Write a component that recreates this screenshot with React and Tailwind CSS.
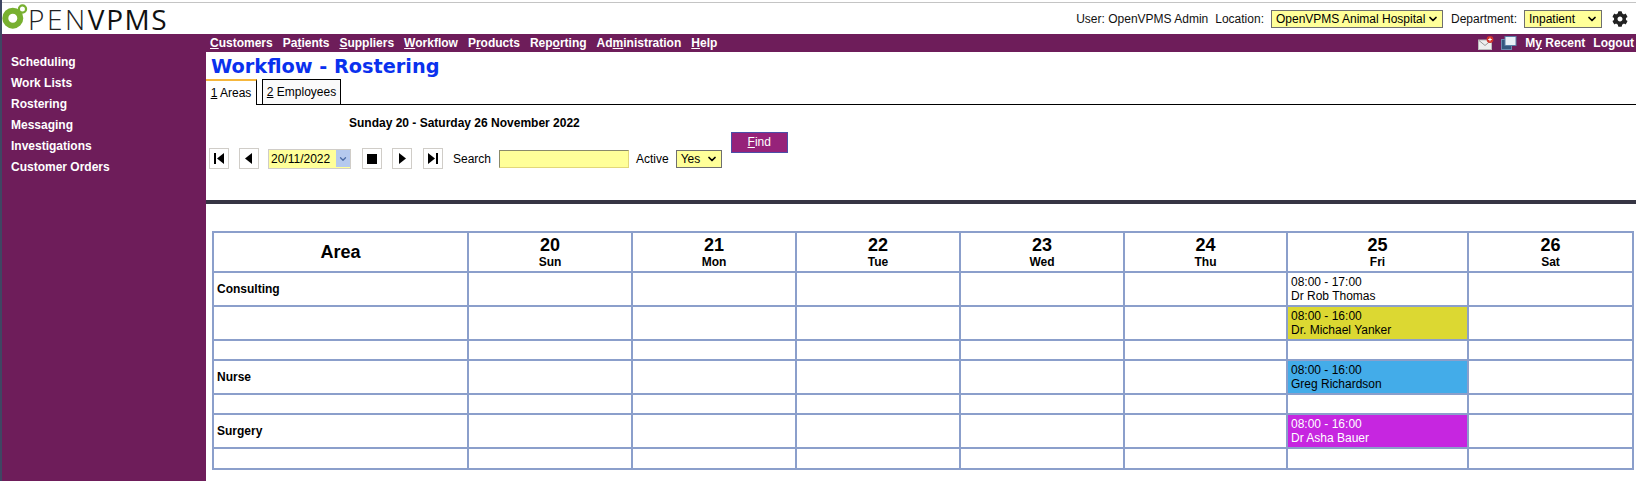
import React from 'react'
import { ChevronDown } from 'lucide-react'
import { FaCog } from 'react-icons/fa'

const font = "font-['Liberation_Sans',Arial,sans-serif]"

const sideLinks = ['Scheduling', 'Work Lists', 'Rostering', 'Messaging', 'Investigations', 'Customer Orders']

// first letter index that gets underlined in the top menu
const menu = [
  ['', 'C', 'ustomers'],
  ['Pa', 't', 'ients'],
  ['', 'S', 'uppliers'],
  ['', 'W', 'orkflow'],
  ['P', 'r', 'oducts'],
  ['Rep', 'o', 'rting'],
  ['Ad', 'm', 'inistration'],
  ['', 'H', 'elp'],
]

const days = [
  ['20', 'Sun'], ['21', 'Mon'], ['22', 'Tue'], ['23', 'Wed'], ['24', 'Thu'], ['25', 'Fri'], ['26', 'Sat'],
]

const rows = [
  { area: 'Consulting', h: 'h-[34px]', time: '08:00 - 17:00', name: 'Dr Rob Thomas', cell: 'text-black' },
  { area: '', h: 'h-[34px]', time: '08:00 - 16:00', name: 'Dr. Michael Yanker', cell: 'bg-[#dcd832] text-black' },
  { area: '', h: 'h-[20px]' },
  { area: 'Nurse', h: 'h-[34px]', time: '08:00 - 16:00', name: 'Greg Richardson', cell: 'bg-[#43ace9] text-black' },
  { area: '', h: 'h-[20px]' },
  { area: 'Surgery', h: 'h-[34px]', time: '08:00 - 16:00', name: 'Dr Asha Bauer', cell: 'bg-[#c626e0] text-white' },
  { area: '', h: 'h-[21px]' },
]

const cellLine = 'border-r-[2px] border-b-[2px] border-r-[#8b9fcb] border-b-[#8b9fcb]'

function NavButton({ children }) {
  return (
    <button className="w-[20px] h-[21px] flex items-center justify-center bg-white border border-[#d0cdc8]">
      {children}
    </button>
  )
}

function YellowSelect({ label, width, className = '' }) {
  return (
    <div className={`h-[18px] ${width} flex items-center justify-between bg-[#ffff99] border border-[#6f6f6f] pl-[4px] pr-[3px] text-[12px] text-black ${className}`}>
      <span>{label}</span>
      <ChevronDown size={12} strokeWidth={3.5} />
    </div>
  )
}

function Logo() {
  return (
    <div className="flex items-center h-[31px]">
      <svg width="26" height="31" viewBox="0 0 26 31" className="shrink-0">
        <circle cx="10.8" cy="15.2" r="7.5" fill="none" stroke="#78b030" strokeWidth="6" />
        <circle cx="20.5" cy="6" r="3.6" fill="#fff" stroke="#78b030" strokeWidth="2.2" />
      </svg>
      <span className="text-[28px] leading-none font-['Open_Sans',sans-serif] font-light text-[#222] tracking-[2.6px]">PEN</span>
      <span className="text-[28px] leading-none font-['Open_Sans',sans-serif] font-medium text-[#111] tracking-[1.6px]">VPMS</span>
    </div>
  )
}

export default function App() {
  return (
    <div className={`w-[1636px] h-[481px] overflow-hidden flex flex-col bg-white ${font} border-l-2 border-l-[#3f4663]`}>
      <div className="h-[34px] shrink-0 bg-white flex flex-col">
        <div className="h-[3px] shrink-0 border-b border-b-[#c4c4c4]" />
        <div className="flex-1 flex items-center justify-between">
          <Logo />
          <div className="flex items-center text-[12px] text-[#111] pr-[8px]">
            <span>User: OpenVPMS Admin</span>
            <span className="ml-[7px]">Location:</span>
            <YellowSelect label="OpenVPMS Animal Hospital" width="w-[172px]" className="ml-[7px]" />
            <span className="ml-[8px]">Department:</span>
            <YellowSelect label="Inpatient" width="w-[78px]" className="ml-[7px]" />
            <FaCog size={16} className="ml-[10px] text-[#222]" />
          </div>
        </div>
      </div>

      <div className="flex-1 flex min-h-0">
        <aside className="w-[204px] shrink-0 bg-[#6e1d5a] pt-[18px] pl-[9px]">
          {sideLinks.map((l) => (
            <div key={l} className="h-[21px] text-[12px] font-bold text-white leading-[21px]">{l}</div>
          ))}
        </aside>

        <main className="flex-1 min-w-0 flex flex-col">
          <div className="h-[18px] shrink-0 bg-[#6e1d5a] flex items-center justify-between text-[12px] font-bold text-white pl-[4px] pr-[2px]">
            <div className="flex gap-[10px]">
              {menu.map(([a, u, b]) => (
                <span key={u + b}>{a}<u>{u}</u>{b}</span>
              ))}
            </div>
            <div className="flex items-center">
              <svg width="16" height="14" viewBox="0 0 16 14">
                <rect x="0.5" y="4" width="13" height="9.5" fill="#eee" stroke="#bbb" />
                <path d="M1 4.5 L7 9.5 L13 4.5" fill="none" stroke="#999" />
                <circle cx="12" cy="3.5" r="3.4" fill="#d0342c" />
                <path d="M10.2 3.5 H13.8 M12 1.7 V5.3" stroke="#fff" />
              </svg>
              <svg width="16" height="14" viewBox="0 0 16 14" className="ml-[7px]">
                <rect x="0.5" y="3.5" width="10" height="10" fill="#33577f" stroke="#6c8bb0" />
                <rect x="4" y="0.5" width="11" height="9" fill="#e8f0f8" stroke="#5a7ea6" />
              </svg>
              <span className="ml-[8px]">M<u>y</u> Recent</span>
              <span className="ml-[8px]">Logout</span>
            </div>
          </div>

          <h1 className="h-[28px] shrink-0 pl-[5px] text-[19.3px] leading-[29px] font-bold text-[#0a31ee] font-['DejaVu_Sans',sans-serif]">Workflow - Rostering</h1>

          <div className="h-[25px] shrink-0 flex items-end border-b border-b-black text-[12px] text-black">
            <div className="h-[26px] w-[51px] -mb-px bg-white border-t-2 border-t-[#f6b73c] border-r border-r-black flex items-center justify-center">
              <span><u>1</u> Areas</span>
            </div>
            <div className="h-[25px] w-[79px] ml-[5px] bg-[#fafafa] border-x border-t border-black flex items-center justify-center">
              <span><u>2</u> Employees</span>
            </div>
          </div>

          <div className="h-[126px] shrink-0 pl-[3px] flex flex-col relative">
            <div className="pl-[140px] pt-[11px] text-[12px] leading-[14px] font-bold text-black">Sunday 20 - Saturday 26 November 2022</div>
            <div className="flex items-center mt-[18px] text-[12px] text-black">
              <NavButton>
                <svg width="14" height="13" viewBox="0 0 14 13"><path d="M2 1h2v11H2zM12 1v11L5 6.5z" /></svg>
              </NavButton>
              <div className="ml-[10px]">
                <NavButton>
                  <svg width="10" height="13" viewBox="0 0 10 13"><path d="M8 1v11L1 6.5z" /></svg>
                </NavButton>
              </div>
              <div className="ml-[9px] h-[20px] w-[83px] flex items-center bg-[#ffff99] border border-[#d0cdc8] pl-[2px]">
                <span className="flex-1">20/11/2022</span>
                <span className="w-[14px] h-[17px] bg-[#b5c9ee] flex items-center justify-center text-[#4a6aa5]">
                  <ChevronDown size={10} strokeWidth={3} />
                </span>
              </div>
              <div className="ml-[11px]">
                <NavButton><span className="block w-[10px] h-[10px] bg-black" /></NavButton>
              </div>
              <div className="ml-[10px]">
                <NavButton>
                  <svg width="10" height="13" viewBox="0 0 10 13"><path d="M2 1v11l7-5.5z" /></svg>
                </NavButton>
              </div>
              <div className="ml-[11px]">
                <NavButton>
                  <svg width="14" height="13" viewBox="0 0 14 13"><path d="M2 1v11l7-5.5zM10 1h2v11h-2z" /></svg>
                </NavButton>
              </div>
              <span className="ml-[10px]">Search</span>
              <div className="ml-[8px] w-[130px] h-[18px] bg-[#ffff99] border border-[#e2d77a] border-t-[#8a8a6a] border-l-[#8a8a6a]" />
              <span className="ml-[7px]">Active</span>
              <YellowSelect label="Yes" width="w-[46px]" className="ml-[7px]" />
              <button className="ml-[9px] -mt-[33px] w-[57px] h-[21px] bg-[#96227a] border border-[#4a4fa8] text-white text-[12px]">
                <u>F</u>ind
              </button>
            </div>
            <div className="absolute left-0 right-0 top-[95px] h-[4px] bg-[#363544]" />
          </div>

          <div className="pl-[6px]">
            <table className="table-fixed border-collapse w-[1420px] border-t-[2px] border-l-[2px] border-[#8b9fcb]">
              <colgroup>
                <col className="w-[255px]" />
                <col className="w-[164px]" />
                <col className="w-[164px]" />
                <col className="w-[164px]" />
                <col className="w-[164px]" />
                <col className="w-[163px]" />
                <col className="w-[181px]" />
                <col className="w-[165px]" />
              </colgroup>
              <thead>
                <tr className="h-[40px]">
                  <th className={`${cellLine} text-[18px] font-bold text-black p-0`}>Area</th>
                  {days.map(([n, d]) => (
                    <th key={n} className={`${cellLine} p-0 text-black font-bold`}>
                      <div className="text-[18px] leading-[20px]">{n}</div>
                      <div className="text-[12px] leading-[14px]">{d}</div>
                    </th>
                  ))}
                </tr>
              </thead>
              <tbody>
                {rows.map((r, i) => (
                  <tr key={i} className={r.h}>
                    <td className={`${cellLine} p-0 pl-[3px] text-[12px] font-bold text-black`}>{r.area}</td>
                    {days.map(([n]) => {
                      const show = n === '25' && r.time
                      return (
                        <td key={n} className={`${cellLine} p-0 pl-[3px] text-[12px] leading-[14px] ${show ? r.cell : ''}`}>
                          {show && <div>{r.time}<br />{r.name}</div>}
                        </td>
                      )
                    })}
                  </tr>
                ))}
              </tbody>
            </table>
          </div>
        </main>
      </div>
    </div>
  )
}
